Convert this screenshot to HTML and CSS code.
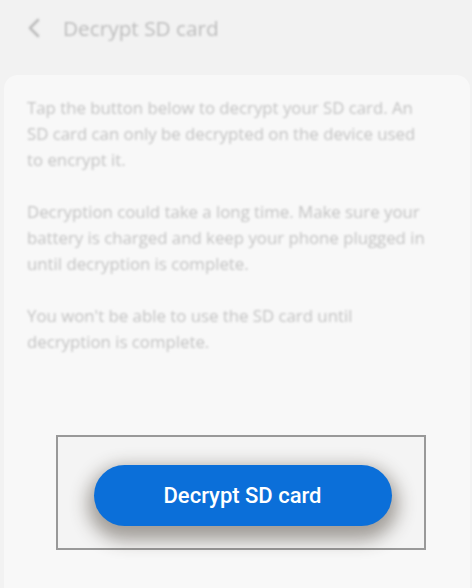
FILE: index.html
```html
<!DOCTYPE html>
<html>
<head>
<meta charset="utf-8">
<link rel="stylesheet" href="styles.css">
</head>
<body>
<div class="screen">
  <header class="appbar">
    <svg class="back" width="14" height="20" viewBox="0 0 14 20"><path d="M11 2 L3 10 L11 18" fill="none" stroke="#bcbcbc" stroke-width="2.6" stroke-linecap="round" stroke-linejoin="round"/></svg>
    <span class="title">Decrypt SD card</span>
  </header>
  <main class="card">
    <div class="text">
      <p>Tap the button below to decrypt your SD card. An<br>SD card can only be decrypted on the device used<br>to encrypt it.</p>
      <p>Decryption could take a long time. Make sure your<br>battery is charged and keep your phone plugged in<br>until decryption is complete.</p>
      <p>You won't be able to use the SD card until<br>decryption is complete.</p>
    </div>
    <div class="frame">
      <button class="btn">Decrypt SD card</button>
    </div>
  </main>
</div>
</body>
</html>
```
FILE: styles.css
```css
html, body {
  margin: 0;
  padding: 0;
  background: #ffffff;
}
.screen {
  width: 472px;
  height: 588px;
  background: #f2f2f2;
  display: flex;
  flex-direction: column;
  font-family: Roboto, "Noto Sans", sans-serif;
  overflow: hidden;
}
.appbar {
  height: 75px;
  display: flex;
  align-items: center;
  padding-left: 27px;
  padding-bottom: 20px;
  box-sizing: border-box;
  filter: blur(1.2px);
}
.back {
  margin-right: 22px;
}
.title {
  font-family: "Open Sans", Roboto, sans-serif;
  font-size: 20.8px;
  color: #bcbcbc;
  font-weight: 400;
}
.card {
  flex: 1;
  margin: 0 2px 0 4px;
  background: #f8f8f8;
  border-radius: 14px 14px 0 0;
  display: flex;
  flex-direction: column;
  padding: 20px 0 0 0;
}
.text {
  padding: 0 4px 0 23px;
  filter: blur(1.3px);
  white-space: nowrap;
}
.text p {
  margin: 0 0 26px 0;
  font-family: "Open Sans", Roboto, sans-serif;
  font-size: 16.8px;
  line-height: 26px;
  color: #c3c3c3;
}
.text p:last-child {
  margin-bottom: 0;
}
.frame {
  margin: 80px 0 0 52px;
  width: 366px;
  height: 111px;
  border: 2px solid #999999;
  background: #f4f4f4;
  display: flex;
  align-items: center;
  justify-content: center;
}
.btn {
  width: 298px;
  height: 61px;
  border: none;
  border-radius: 31px;
  background: #0b6fd9;
  color: #ffffff;
  font-family: Roboto, "Noto Sans", sans-serif;
  font-size: 22px;
  font-weight: 500;
  box-shadow: 0 8px 18px 6px rgba(60, 50, 40, 0.45);
  margin-top: 5px;
  margin-left: 3px;
}
```
